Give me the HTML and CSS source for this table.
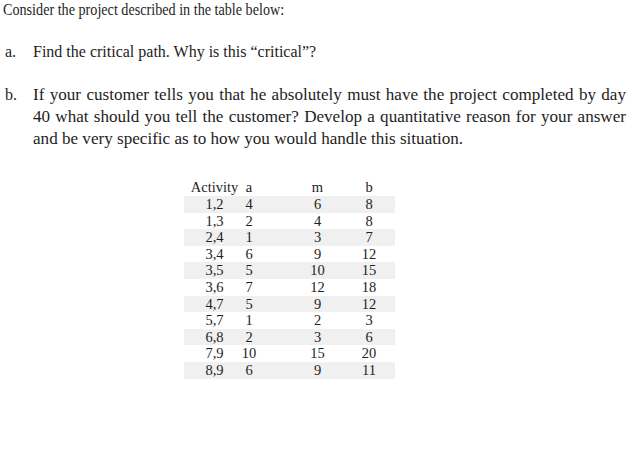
FILE: index.html
```html
<!DOCTYPE html>
<html>
<head>
<meta charset="utf-8">
<link rel="stylesheet" href="styles.css">
</head>
<body>
<div class="page">
  <p class="intro"><span class="intro-text">Consider the project described in the table below:</span></p>
  <div class="item item-a">
    <span class="marker">a.</span>
    <span class="body">Find the critical path. Why is this “critical”?</span>
  </div>
  <div class="item item-b">
    <span class="marker">b.</span>
    <span class="body">
      <span class="line full">If your customer tells you that he absolutely must have the project completed by day</span>
      <span class="line full">40 what should you tell the customer? Develop a quantitative reason for your answer</span>
      <span class="line">and be very specific as to how you would handle this situation.</span>
    </span>
  </div>
  <div class="table">
    <div class="row head"><span class="c1">Activity</span><span class="c2">a</span><span class="c3">m</span><span class="c4">b</span></div>
    <div class="row shade"><span class="c1">1,2</span><span class="c2">4</span><span class="c3">6</span><span class="c4">8</span></div>
    <div class="row"><span class="c1">1,3</span><span class="c2">2</span><span class="c3">4</span><span class="c4">8</span></div>
    <div class="row shade"><span class="c1">2,4</span><span class="c2">1</span><span class="c3">3</span><span class="c4">7</span></div>
    <div class="row"><span class="c1">3,4</span><span class="c2">6</span><span class="c3">9</span><span class="c4">12</span></div>
    <div class="row shade"><span class="c1">3,5</span><span class="c2">5</span><span class="c3">10</span><span class="c4">15</span></div>
    <div class="row"><span class="c1">3,6</span><span class="c2">7</span><span class="c3">12</span><span class="c4">18</span></div>
    <div class="row shade"><span class="c1">4,7</span><span class="c2">5</span><span class="c3">9</span><span class="c4">12</span></div>
    <div class="row"><span class="c1">5,7</span><span class="c2">1</span><span class="c3">2</span><span class="c4">3</span></div>
    <div class="row shade"><span class="c1">6,8</span><span class="c2">2</span><span class="c3">3</span><span class="c4">6</span></div>
    <div class="row"><span class="c1">7,9</span><span class="c2">10</span><span class="c3">15</span><span class="c4">20</span></div>
    <div class="row shade"><span class="c1">8,9</span><span class="c2">6</span><span class="c3">9</span><span class="c4">11</span></div>
  </div>
</div>
</body>
</html>
```

FILE: styles.css
```css
html, body {
  margin: 0;
  padding: 0;
  background: #ffffff;
}
.page {
  font-family: "Liberation Serif", "Times New Roman", serif;
  color: #1e1e1e;
  padding: 0 0 0 3px;
}
.intro {
  margin: 0;
  font-size: 16px;
  line-height: 20px;
  white-space: nowrap;
}
.intro-text {
  display: inline-block;
  transform: scaleX(0.885);
  transform-origin: left center;
}
.item {
  display: flex;
  font-size: 16px;
  line-height: 22px;
}
.item-a {
  margin-top: 21px;
}
.item-b {
  margin-top: 21px;
}
.item-b .body {
  font-size: 17.1px;
}
.marker {
  flex: 0 0 30px;
  padding-left: 2px;
  box-sizing: border-box;
}
.body {
  flex: 1;
  padding-right: 16px;
}
.line {
  display: block;
  white-space: nowrap;
}
.line.full {
  text-align: justify;
  text-align-last: justify;
}
.table {
  margin: 29px 0 0 181px;
  width: 211px;
  font-size: 14.5px;
}
.row {
  display: grid;
  grid-template-columns: 57px 16px 76px 62px;
  height: 16.6px;
  line-height: 16.6px;
  text-align: center;
  white-space: nowrap;
}
.row.head {
  height: 17px;
}
.shade {
  background: #f0f0f0;
}
.c1 {
  padding-left: 4px;
}
.c3 {
  padding-left: 45px;
}
.c4 {
  padding-left: 21px;
  padding-right: 11px;
}
```
